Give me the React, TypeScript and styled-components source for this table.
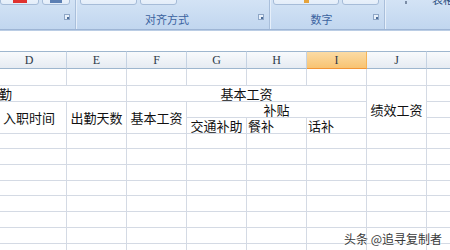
import { FC } from 'react'
import styled, { createGlobalStyle } from 'styled-components'

const GlobalStyle = createGlobalStyle`
  html, body {
    margin: 0;
    padding: 0;
    background: #ffffff;
  }
`

const Screen = styled.div`
  position: relative;
  width: 450px;
  height: 250px;
  overflow: hidden;
  background: #ffffff;
  font-family: 'Noto Sans CJK SC', 'Noto Sans', sans-serif;
`

// ribbon
const Ribbon = styled.div`
  display: flex;
  flex-direction: column;
  height: 31px;
`
const GroupsRow = styled.div`
  display: flex;
  height: 29px;
  background: linear-gradient(#d3e3f5, #c1d6ef);
`
const BottomEdge = styled.div`
  height: 2px;
  background: linear-gradient(#8fa9cd, #c9d9ec);
`
const Group = styled.div<{ $width: number }>`
  width: ${(p) => p.$width}px;
  flex: none;
  display: flex;
  flex-direction: column;
  box-sizing: border-box;
  border-right: 1px solid #a9bfdb;
  box-shadow: 1px 0 0 #e6effa;
`
const ButtonRow = styled.div<{ $pad: number }>`
  height: 5px;
  overflow: hidden;
  display: flex;
  align-items: flex-end;
  gap: 3px;
  padding-left: ${(p) => p.$pad}px;
`
const RibbonBtn = styled.div<{ $width: number }>`
  position: relative;
  width: ${(p) => p.$width}px;
  height: 14px;
  flex: none;
  box-sizing: border-box;
  border: 1px solid #a6bcd8;
  border-radius: 3px;
  background: linear-gradient(#f4f8fd, #e3edf9);
  display: flex;
  align-items: flex-end;
  justify-content: center;
`
const Swatch = styled.div<{ $color: string; $w: number }>`
  width: ${(p) => p.$w}px;
  height: 3px;
  margin-bottom: 1px;
  background: ${(p) => p.$color};
`
const TopText = styled.div`
  font-size: 11px;
  line-height: 11px;
  color: #2a4d7e;
  margin-left: auto;
  white-space: nowrap;
`
const LabelRow = styled.div`
  flex: 1;
  display: flex;
  align-items: center;
  padding-right: 5px;
  padding-top: 3px;
`
const GroupLabel = styled.div`
  flex: 1;
  text-align: center;
  font-size: 11px;
  line-height: 12px;
  color: #3b63a0;
`
const Launcher = styled.div`
  width: 6px;
  height: 6px;
  box-sizing: border-box;
  border: 1px solid #8ea6c6;
  background: #e8f0fa;
  margin-bottom: 3px;
  position: relative;
  &::after {
    content: '';
    position: absolute;
    right: 0;
    bottom: 0;
    width: 2px;
    height: 2px;
    background: #4d6d98;
  }
`

const FormulaArea = styled.div`
  height: 20px;
  background: #ffffff;
`

// sheet
const Sheet = styled.div`
  display: grid;
  grid-template-columns: 75px repeat(6, 60px) 60px;
  margin-left: -8px;
`
const HeaderCell = styled.div<{ $active?: boolean }>`
  height: 18px;
  box-sizing: border-box;
  border-top: 1px solid #9eb6ce;
  border-bottom: 1px solid ${(p) => (p.$active ? '#f29536' : '#9eb6ce')};
  border-right: 1px solid ${(p) => (p.$active ? '#f6b456' : '#c5d2e2')};
  background: ${(p) =>
    p.$active
      ? 'linear-gradient(#fbdba5, #f8c372)'
      : 'linear-gradient(#f8fafc, #e6ebf2)'};
  display: flex;
  align-items: center;
  justify-content: center;
  font-family: 'Liberation Serif', serif;
  font-size: 12px;
  color: #2f3a48;
`
const Body = styled.div`
  display: grid;
  grid-template-columns: 75px repeat(6, 60px) 60px;
  grid-template-rows: 17px 16px 16px 16px 15px 16px 16px 15px 16px 16px 16px 16px;
  margin-left: -8px;
`
const Cell = styled.div<{
  $col: number
  $row: number
  $colSpan?: number
  $rowSpan?: number
  $align?: 'left' | 'center'
  $valign?: 'end' | 'center'
  $indent?: number
}>`
  grid-column: ${(p) => p.$col} / span ${(p) => p.$colSpan || 1};
  grid-row: ${(p) => p.$row} / span ${(p) => p.$rowSpan || 1};
  box-sizing: border-box;
  border-right: 1px solid #d4dae4;
  border-bottom: 1px solid #d4dae4;
  display: flex;
  justify-content: ${(p) => (p.$align === 'left' ? 'flex-start' : 'center')};
  align-items: ${(p) => (p.$valign === 'center' ? 'center' : 'flex-end')};
  padding-left: ${(p) => (p.$align === 'left' ? p.$indent ?? 1 : 0)}px;
  font-size: 13px;
  line-height: 14px;
  color: #111111;
  white-space: nowrap;
`
const Watermark = styled.div`
  position: absolute;
  right: 8px;
  bottom: 5px;
  font-size: 12px;
  line-height: 13px;
  color: #3a3a3a;
  text-shadow: 0 0 2px #ffffff, 0 0 2px #ffffff;
`

const columns = ['D', 'E', 'F', 'G', 'H', 'I', 'J', '']

type CellDef = {
  col: number
  row: number
  colSpan?: number
  rowSpan?: number
  text?: string
  align?: 'left' | 'center'
  valign?: 'end' | 'center'
  indent?: number
}

const headerCells: CellDef[] = [
  { col: 1, row: 2, colSpan: 2, text: '勤', align: 'left', indent: 7 },
  { col: 3, row: 2, colSpan: 4, text: '基本工资' },
  { col: 7, row: 2, rowSpan: 3, text: '绩效工资', valign: 'center' },
  { col: 1, row: 3, rowSpan: 2, text: '入职时间', valign: 'center' },
  { col: 2, row: 3, rowSpan: 2, text: '出勤天数', valign: 'center' },
  { col: 3, row: 3, rowSpan: 2, text: '基本工资', valign: 'center' },
  { col: 4, row: 3, colSpan: 3, text: '补贴' },
  { col: 4, row: 4, text: '交通补助' },
  { col: 5, row: 4, text: '餐补', align: 'left' },
  { col: 6, row: 4, text: '话补', align: 'left' },
  { col: 8, row: 2 },
  { col: 8, row: 3 },
  { col: 8, row: 4 },
]

function buildCells(): CellDef[] {
  const list: CellDef[] = []
  for (let c = 1; c <= 8; c++) list.push({ col: c, row: 1 })
  list.push(...headerCells)
  for (let r = 5; r <= 12; r++) {
    for (let c = 1; c <= 8; c++) list.push({ col: c, row: r })
  }
  return list
}

const App: FC = () => {
  const cells = buildCells()
  return (
    <>
      <GlobalStyle />
      <Screen>
        <Ribbon>
          <GroupsRow>
            <Group $width={76}>
              <ButtonRow $pad={0}>
                <RibbonBtn $width={39}>
                  <Swatch $color='#e0322f' $w={14} />
                </RibbonBtn>
                <RibbonBtn $width={28}>
                  <Swatch $color='#5c7fb3' $w={12} />
                </RibbonBtn>
              </ButtonRow>
              <LabelRow>
                <GroupLabel />
                <Launcher />
              </LabelRow>
            </Group>
            <Group $width={194}>
              <ButtonRow $pad={4}>
                <RibbonBtn $width={57} />
                <RibbonBtn $width={37} />
              </ButtonRow>
              <LabelRow>
                <GroupLabel>对齐方式</GroupLabel>
                <Launcher />
              </LabelRow>
            </Group>
            <Group $width={115}>
              <ButtonRow $pad={3}>
                <RibbonBtn $width={66}>
                  <Swatch $color='#e5a33c' $w={5} />
                </RibbonBtn>
                <RibbonBtn $width={37} />
              </ButtonRow>
              <LabelRow>
                <GroupLabel>数字</GroupLabel>
                <Launcher />
              </LabelRow>
            </Group>
            <Group $width={70}>
              <ButtonRow $pad={20}>
                <Swatch $color='#7b8da6' $w={2} />
                <TopText>表格</TopText>
              </ButtonRow>
              <LabelRow />
            </Group>
          </GroupsRow>
          <BottomEdge />
        </Ribbon>
        <FormulaArea />
        <Sheet>
          {columns.map((c, i) => (
            <HeaderCell key={i} $active={c === 'I'}>
              {c}
            </HeaderCell>
          ))}
        </Sheet>
        <Body>
          {cells.map((cell, i) => (
            <Cell
              key={i}
              $col={cell.col}
              $row={cell.row}
              $colSpan={cell.colSpan}
              $rowSpan={cell.rowSpan}
              $align={cell.align}
              $valign={cell.valign}
              $indent={cell.indent}
            >
              {cell.text}
            </Cell>
          ))}
        </Body>
        <Watermark>头条 @追寻复制者</Watermark>
      </Screen>
    </>
  )
}

export default App
